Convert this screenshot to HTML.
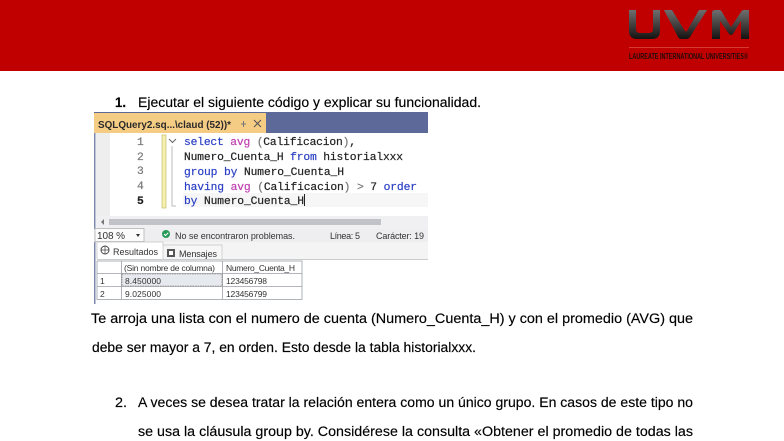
<!DOCTYPE html>
<html><head><meta charset="utf-8"><style>
html,body{margin:0;padding:0;background:#fff;width:784px;height:441px;overflow:hidden}
svg{position:absolute;left:0;top:0;display:block}
.d{font-family:"Liberation Sans",sans-serif;font-size:13.5px;fill:#000;stroke:#000;stroke-width:.15px}
.m{font-family:"Liberation Mono",monospace;font-size:11.3px;fill:#222;stroke:#222;stroke-width:.2px}
.k{fill:#2b3fc4;stroke:#2b3fc4}.p{fill:#c040b0;stroke:#c040b0}.g{fill:#777;stroke:#777}
.u{font-family:"Liberation Sans",sans-serif;font-size:9px;fill:#333}
</style></head><body>
<svg width="784" height="441" viewBox="0 0 784 441" xmlns="http://www.w3.org/2000/svg">
<defs><linearGradient id="lg" x1="0" y1="0" x2="0" y2="1"><stop offset="0" stop-color="#6e6e6e"/><stop offset="0.5" stop-color="#454040"/><stop offset="1" stop-color="#151212"/></linearGradient>
<filter id="b" x="0" y="0" width="1" height="1"><feGaussianBlur stdDeviation="0.35"/></filter></defs>
<rect width="784" height="71" fill="#c00000"/>
<g fill="url(#lg)">
<path d="M629 10h7v19q0 4 4 4h9q4 0 4-4V10h7v21q0 8-8 8h-15q-8 0-8-8z"/>
<path d="M664 10h8l13 21q1 1 2 0l12-21h8l-17 27q-1 2-4 2h-5q-2 0-3-2z"/>
<path d="M712 39V13q0-3 3-3h4q2 0 3 2L731 27 741 12q1-2 3-2h5V39h-8V21L733 34q-2 2-4 0L720 21V39z"/>
</g>
<rect x="629" y="47" width="120" height="1" fill="#d63a2a"/>
<text x="629" y="59" font-family="Liberation Sans,sans-serif" font-weight="700" font-size="8" fill="#220a0a" textLength="119" lengthAdjust="spacingAndGlyphs">LAUREATE INTERNATIONAL UNIVERSITIES®</text>

<text class="d" x="115" y="107" textLength="11" lengthAdjust="spacingAndGlyphs" font-weight="700">1.</text>
<text class="d" x="138" y="107" textLength="343" lengthAdjust="spacingAndGlyphs">Ejecutar el siguiente código y explicar su funcionalidad.</text>

<!-- SSMS screenshot -->
<g filter="url(#b)">
<rect x="94" y="112" width="334" height="192" fill="#fff"/>
<rect x="94" y="112" width="334" height="21" fill="#5d6b99"/>
<rect x="94" y="113" width="172" height="20" fill="#f5cc84"/>
<text x="98" y="128" font-family="Liberation Sans,sans-serif" font-size="10.5" font-weight="700" fill="#2a2a2a" textLength="133" lengthAdjust="spacingAndGlyphs">SQLQuery2.sq...\claud (52))*</text>
<path d="M241 124h5M243.500 121v6" stroke="#777" stroke-width="1" fill="none"/>
<path d="M254 120l7 7M261 120l-7 7" stroke="#555" stroke-width="1.100" fill="none"/>
<rect x="94" y="133" width="1.500" height="171" fill="#5d6b99" opacity=".8"/>
<rect x="96" y="133" width="14" height="83" fill="#eeeeee"/>
<text class="m g" x="137" y="145">1</text><text class="m g" x="137" y="160">2</text><text class="m g" x="137" y="174">3</text><text class="m g" x="137" y="189">4</text><text class="m" x="137" y="204" font-weight="700">5</text>
<rect x="162" y="135" width="4" height="73" fill="#f4f0b0" stroke="#c9bd6a" stroke-width=".7"/>
<path d="M169 139l3.500 3.500 3.500-3.500" stroke="#666" fill="none"/>
<path d="M172 146v60h4" stroke="#bbb" fill="none"/>
<rect x="183" y="193" width="245" height="14" fill="#f6f6f6"/>
<text class="m" x="184" y="145" textLength="172"><tspan class="k">select</tspan> <tspan class="p">avg</tspan> <tspan class="g">(</tspan>Calificacion<tspan class="g">)</tspan>,</text>
<text class="m" x="184" y="160" textLength="219">Numero_Cuenta_H <tspan class="k">from</tspan> historialxxx</text>
<text class="m" x="184" y="175" textLength="160"><tspan class="k">group</tspan> <tspan class="k">by</tspan> Numero_Cuenta_H</text>
<text class="m" x="184" y="190" textLength="233"><tspan class="k">having</tspan> <tspan class="p">avg</tspan> <tspan class="g">(</tspan>Calificacion<tspan class="g">) &gt;</tspan> 7 <tspan class="k">order</tspan></text>
<text class="m" x="184" y="204" textLength="120"><tspan class="k">by</tspan> Numero_Cuenta_H</text>
<rect x="304" y="194" width="1" height="12" fill="#222"/>
<rect x="96" y="216" width="332" height="13" fill="#f0f0f2"/>
<rect x="109" y="219" width="272" height="6" fill="#c2c3c9"/>
<path d="M104 219l-3 3 3 3z" fill="#777"/>
<rect x="94" y="229" width="334" height="13" fill="#eeeef0"/>
<rect x="95" y="228.500" width="49" height="13" fill="#fbfbfb" stroke="#aaa" stroke-width=".7"/>
<text class="u" x="97" y="239" style="font-size:10px" textLength="28">108 %</text>
<path d="M136 234l4 0-2 3z" fill="#333"/>
<circle cx="166" cy="234" r="4" fill="#2a9a5a"/>
<path d="M164 234l1.500 1.500 2.700-2.700" stroke="#fff" fill="none"/>
<text class="u" x="175" y="239" textLength="120">No se encontraron problemas.</text>
<text class="u" x="330" y="239" textLength="30">Línea: 5</text>
<text class="u" x="376" y="239" textLength="48">Carácter: 19</text>
<rect x="96" y="242" width="332" height="17" fill="#f4f4f5"/>
<path d="M97 259v-17h66v17" fill="#fff" stroke="#c4c4c4" stroke-width=".7"/>
<path d="M163 245h59v14" fill="#f7f7f7" stroke="#c4c4c4" stroke-width=".7"/>
<rect x="97" y="259" width="331" height="1" fill="#ccc"/>
<circle cx="105" cy="250" r="4" fill="none" stroke="#444" stroke-width="1"/><path d="M101 250h8M105 246v8" stroke="#444" stroke-width=".7"/>
<text class="u" x="113" y="255" textLength="45">Resultados</text>
<rect x="167" y="249" width="8" height="8" fill="#555"/><rect x="169" y="251" width="4" height="4" fill="#fff"/>
<text class="u" x="179" y="257" textLength="38">Mensajes</text>
<g fill="none" stroke="#9aa0a6" stroke-width=".8">
<rect x="97" y="261" width="205" height="38.500"/>
<path d="M97 273.500h205M97 286.500h205M121.500 261v38M222.500 261v38"/>
</g>
<rect x="122" y="274" width="100" height="12" fill="#e6e9ee"/>
<rect x="122" y="274" width="100" height="12" fill="none" stroke="#666" stroke-width=".6" stroke-dasharray="1.500 1"/>
<text class="u" x="124" y="271" style="font-size:8.500px" textLength="91">(Sin nombre de columna)</text>
<text class="u" x="226" y="271" style="font-size:8.500px" textLength="69">Numero_Cuenta_H</text>
<text class="u" x="100" y="284" style="font-size:8.500px">1</text>
<text class="u" x="100" y="297" style="font-size:8.500px">2</text>
<text class="u" x="125" y="284" style="font-size:8.500px" textLength="36">8.450000</text>
<text class="u" x="125" y="297" style="font-size:8.500px" textLength="36">9.025000</text>
<text class="u" x="226" y="284" style="font-size:8.500px" textLength="41">123456798</text>
<text class="u" x="226" y="297" style="font-size:8.500px" textLength="41">123456799</text>
</g>

<text class="d" x="91" y="323" textLength="602" lengthAdjust="spacingAndGlyphs">Te arroja una lista con el numero de cuenta (Numero_Cuenta_H) y con el promedio (AVG) que</text>
<text class="d" x="92" y="352" textLength="384" lengthAdjust="spacingAndGlyphs">debe ser mayor a 7, en orden. Esto desde la tabla historialxxx.</text>
<text class="d" x="115" y="407" textLength="12" lengthAdjust="spacingAndGlyphs">2.</text>
<text class="d" x="138" y="407" textLength="555" lengthAdjust="spacingAndGlyphs">A veces se desea tratar la relación entera como un único grupo. En casos de este tipo no</text>
<text class="d" x="138" y="436" textLength="555" lengthAdjust="spacingAndGlyphs">se usa la cláusula group by. Considérese la consulta «Obtener el promedio de todas las</text>
</svg>
</body></html>
